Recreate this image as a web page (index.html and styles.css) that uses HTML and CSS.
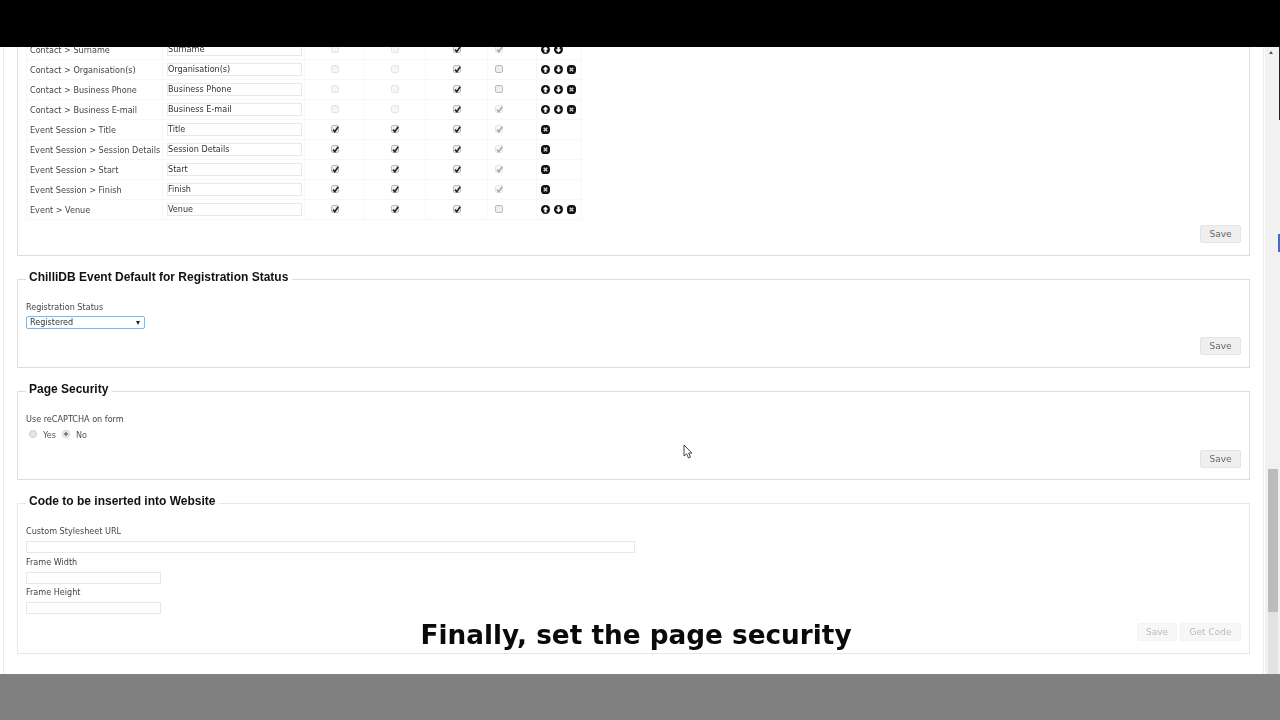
FILE: index.html
```html
<!DOCTYPE html>
<html lang="en">
<head>
<meta charset="utf-8">
<title>Form settings</title>
<link rel="stylesheet" href="styles.css">
</head>
<body>
<svg class="defs" width="0" height="0" aria-hidden="true">
  <symbol id="tick" viewBox="0 0 9 9"><path d="M2 4.6 3.8 6.6 7.2 1.8" fill="none" stroke="currentColor" stroke-width="1.6"/></symbol>
  <symbol id="up" viewBox="0 0 9 9"><circle cx="4.5" cy="4.5" r="4.5" fill="#111"/><path d="M4.5 1.5 7.4 4.6H5.6V7.4H3.4V4.6H1.6z" fill="#fff"/></symbol>
  <symbol id="down" viewBox="0 0 9 9"><circle cx="4.5" cy="4.5" r="4.5" fill="#111"/><path d="M4.5 7.5 7.4 4.4H5.6V1.6H3.4V4.4H1.6z" fill="#fff"/></symbol>
  <symbol id="del" viewBox="0 0 9 9"><rect width="9" height="9" rx="3.6" fill="#111"/><path d="M2.8 2.8 6.2 6.2M6.2 2.8 2.8 6.2" stroke="#ccc" stroke-width="1.6"/></symbol>
</svg>
<div class="top"></div>
<main class="stage">
  <div class="page">
    <div class="content">
      <fieldset class="panel first">
        <table class="grid">
          <tr><td class="lbl">Contact &gt; Surname</td><td class="val"><div class="txt">Surname</div></td><td class="c1"><span class="box off"></span></td><td class="c2"><span class="box off"></span></td><td class="c3"><span class="box on"><svg><use href="#tick"/></svg></span></td><td class="c4"><span class="box dim"><svg><use href="#tick"/></svg></span></td><td class="acts"><svg><use href="#up"/></svg><svg><use href="#down"/></svg></td></tr>
          <tr><td class="lbl">Contact &gt; Organisation(s)</td><td class="val"><div class="txt">Organisation(s)</div></td><td class="c1"><span class="box off"></span></td><td class="c2"><span class="box off"></span></td><td class="c3"><span class="box on"><svg><use href="#tick"/></svg></span></td><td class="c4"><span class="box on"></span></td><td class="acts"><svg><use href="#up"/></svg><svg><use href="#down"/></svg><svg><use href="#del"/></svg></td></tr>
          <tr><td class="lbl">Contact &gt; Business Phone</td><td class="val"><div class="txt">Business Phone</div></td><td class="c1"><span class="box off"></span></td><td class="c2"><span class="box off"></span></td><td class="c3"><span class="box on"><svg><use href="#tick"/></svg></span></td><td class="c4"><span class="box on"></span></td><td class="acts"><svg><use href="#up"/></svg><svg><use href="#down"/></svg><svg><use href="#del"/></svg></td></tr>
          <tr><td class="lbl">Contact &gt; Business E-mail</td><td class="val"><div class="txt">Business E-mail</div></td><td class="c1"><span class="box off"></span></td><td class="c2"><span class="box off"></span></td><td class="c3"><span class="box on"><svg><use href="#tick"/></svg></span></td><td class="c4"><span class="box dim"><svg><use href="#tick"/></svg></span></td><td class="acts"><svg><use href="#up"/></svg><svg><use href="#down"/></svg><svg><use href="#del"/></svg></td></tr>
          <tr><td class="lbl">Event Session &gt; Title</td><td class="val"><div class="txt">Title</div></td><td class="c1"><span class="box on"><svg><use href="#tick"/></svg></span></td><td class="c2"><span class="box on"><svg><use href="#tick"/></svg></span></td><td class="c3"><span class="box on"><svg><use href="#tick"/></svg></span></td><td class="c4"><span class="box dim"><svg><use href="#tick"/></svg></span></td><td class="acts"><svg><use href="#del"/></svg></td></tr>
          <tr><td class="lbl">Event Session &gt; Session Details</td><td class="val"><div class="txt">Session Details</div></td><td class="c1"><span class="box on"><svg><use href="#tick"/></svg></span></td><td class="c2"><span class="box on"><svg><use href="#tick"/></svg></span></td><td class="c3"><span class="box on"><svg><use href="#tick"/></svg></span></td><td class="c4"><span class="box dim"><svg><use href="#tick"/></svg></span></td><td class="acts"><svg><use href="#del"/></svg></td></tr>
          <tr><td class="lbl">Event Session &gt; Start</td><td class="val"><div class="txt">Start</div></td><td class="c1"><span class="box on"><svg><use href="#tick"/></svg></span></td><td class="c2"><span class="box on"><svg><use href="#tick"/></svg></span></td><td class="c3"><span class="box on"><svg><use href="#tick"/></svg></span></td><td class="c4"><span class="box dim"><svg><use href="#tick"/></svg></span></td><td class="acts"><svg><use href="#del"/></svg></td></tr>
          <tr><td class="lbl">Event Session &gt; Finish</td><td class="val"><div class="txt">Finish</div></td><td class="c1"><span class="box on"><svg><use href="#tick"/></svg></span></td><td class="c2"><span class="box on"><svg><use href="#tick"/></svg></span></td><td class="c3"><span class="box on"><svg><use href="#tick"/></svg></span></td><td class="c4"><span class="box dim"><svg><use href="#tick"/></svg></span></td><td class="acts"><svg><use href="#del"/></svg></td></tr>
          <tr><td class="lbl">Event &gt; Venue</td><td class="val"><div class="txt">Venue</div></td><td class="c1"><span class="box on"><svg><use href="#tick"/></svg></span></td><td class="c2"><span class="box on"><svg><use href="#tick"/></svg></span></td><td class="c3"><span class="box on"><svg><use href="#tick"/></svg></span></td><td class="c4"><span class="box on"></span></td><td class="acts"><svg><use href="#up"/></svg><svg><use href="#down"/></svg><svg><use href="#del"/></svg></td></tr>
        </table>
        <div class="actions a1"><button class="btn">Save</button></div>
      </fieldset>

      <fieldset class="panel p2">
        <legend>ChilliDB Event Default for Registration Status</legend>
        <div class="label">Registration Status</div>
        <div class="select"><span>Registered</span><i class="caret"></i></div>
        <div class="actions a2"><button class="btn">Save</button></div>
      </fieldset>

      <fieldset class="panel p3">
        <legend>Page Security</legend>
        <div class="label">Use reCAPTCHA on form</div>
        <div class="radios">
          <span class="radio"></span><span class="rtext">Yes</span>
          <span class="radio sel"></span><span class="rtext">No</span>
        </div>
        <div class="actions a3"><button class="btn">Save</button></div>
      </fieldset>

      <fieldset class="panel p4">
        <legend>Code to be inserted into Website</legend>
        <div class="label">Custom Stylesheet URL</div>
        <div class="field wide"></div>
        <div class="label">Frame Width</div>
        <div class="field"></div>
        <div class="label">Frame Height</div>
        <div class="field"></div>
        <div class="actions a4"><button class="btn faint">Save</button><button class="btn faint">Get Code</button></div>
      </fieldset>
    </div>
    <div class="scrollbar"><span class="arrow"></span><span class="thumb"></span><span class="track-low"></span></div>
  </div>
  <div class="edge"><span class="edge-dark"></span><span class="edge-blue"></span></div>
  <p class="caption">Finally, set the page security</p>
  <svg class="cursor" width="12" height="16" viewBox="0 0 12 16"><path d="M1 1v11l2.6-2.2L5.5 14l2-.9-1.8-4H9z" fill="#fff" stroke="#444" stroke-width="1"/></svg>
</main>
<div class="bottom"></div>
</body>
</html>
```

FILE: styles.css
```css
* { box-sizing: border-box; }
html, body { margin: 0; height: 100%; }
body {
  width: 1280px; height: 720px; overflow: hidden;
  display: flex; flex-direction: column;
  background: #fff; color: #444;
  font: 9px "DejaVu Sans", sans-serif;
  font-stretch: condensed;
}
.defs { position: absolute; }
.top { height: 47px; background: #000; flex: none; }
.bottom { height: 46px; background: #808080; flex: none; }
.stage { position: relative; height: 627px; flex: none; overflow: hidden; }
.page { display: flex; height: 100%; padding-left: 3px; }
.content {
  width: 1261px; padding: 0 13px;
  border-left: 1px solid #ececec; border-right: 1px solid #ececec;
  margin-top: -8px;
  filter: blur(.3px);
}
.panel {
  margin: 0 0 16px; padding: 0 9px 0 8px;
  border: 1px solid #ddd; min-width: 0; position: relative;
}
.panel legend {
  margin: 0; padding: 0 4px 0 3px; transform: translateY(-2px);
  font: bold 12px/14px "Liberation Sans", sans-serif; color: #111;
}
.first { border-top: 0; height: 217px; }
.grid { border-collapse: collapse; table-layout: fixed; width: 555px; }
.grid td { height: 20px; padding: 0; border: 1px solid #f7f7f7; text-align: center; vertical-align: middle; line-height: 0; }
.grid td.lbl { width: 136px; text-align: left; padding-left: 3px; color: #444; line-height: 12px; white-space: nowrap; }
.val { width: 142px; }
.c1 { width: 60px; } .c2 { width: 61px; } .c3 { width: 62px; } .c4 { width: 49px; } .acts { width: 45px; }
.grid td.val { text-align: left; padding-left: 4px; }
.grid td.c4 { text-align: left; padding-left: 7px; }
.txt {
  width: 135px; height: 13px; border: 1px solid #e8e8e8;
  padding: 0; color: #333; line-height: 11px;
}
.box {
  display: inline-block; width: 8px; height: 8px; border-radius: 2px; margin-top: -2px;
  border: 1px solid #bbb; background: #eee; color: #222; position: relative; vertical-align: middle;
}
.box svg { position: absolute; left: -1px; top: -1px; width: 9px; height: 9px; }
.box.off { background: #f6f6f6; border-color: #e4e4e4; }
.box.dim { background: #f8f8f8; border-color: #e6e6e6; color: #aaa; }
.grid td.acts { text-align: left; padding-left: 4px; }
.acts svg { width: 9px; height: 9px; margin-right: 4px; vertical-align: middle; }
.actions { display: flex; justify-content: flex-end; gap: 3px; margin-right: -1px; }
.a1 { margin-top: 5px; }
.btn {
  width: 41px; height: 18px; padding: 0; border: 1px solid #e4e4e4; border-radius: 2px;
  background: #efefef; color: #666; font: 9px "DejaVu Sans", sans-serif;
}
.btn.faint { width: 40px; background: #f7f7f7; border-color: #f3f3f3; color: #bbb; }
.btn.faint + .btn.faint { width: 61px; }
.label { color: #444; line-height: 12px; }
.p2, .p3 { height: 96px; }
.p4 { height: 158px; border-color: #e8e8e8; }
.panel legend + .label { margin-top: 15px; }
.select {
  width: 119px; height: 13px; margin-top: 3px; padding: 0 3px;
  border: 1px solid #8eb2d6; border-radius: 2px; color: #333;
  line-height: 11px; display: flex; align-items: center; justify-content: space-between;
}
.caret { width: 0; height: 0; border: 2.5px solid transparent; border-top: 4px solid #222; border-bottom: 0; margin-right: 1px; }
.a2 { margin-top: 8px; }
.radios { display: flex; align-items: center; height: 12px; margin-top: 4px; margin-left: 3px; }
.radio { width: 8px; height: 8px; border-radius: 50%; border: 1px solid #ccc; background: #e6e6e6; margin-top: -2px; }
.radio.sel { background: radial-gradient(circle, #777 0 1.5px, #f4f4f4 2px); margin-left: 6px; }
.rtext { color: #555; margin-left: 6px; }
.a3 { margin-top: 9px; }
.p4 .label { margin-top: 2.5px; }
.p4 legend + .label { margin-top: 15px; }
.field { width: 135px; height: 12px; border: 1px solid #e8e8e8; margin-top: 4px; }
.field.wide { width: 609px; }
.a4 { margin-top: 8.5px; }
.scrollbar { position: relative; width: 15px; margin-left: 1px; background: #f1f1f1; }
.arrow { position: absolute; left: 4px; top: 4px; border: 2.5px solid transparent; border-bottom: 3px solid #555; border-top: 0; }
.thumb { position: absolute; left: 3px; top: 422px; width: 10px; height: 143px; background: #bcbcbc; }
.track-low { position: absolute; left: 3px; top: 565px; width: 10px; height: 62px; background: #e2e2e2; }
.edge { position: absolute; right: 0; top: 0; width: 2px; height: 100%; }
.edge-dark { display: block; margin-left: 1px; width: 1px; height: 73px; background: #222; }
.edge-blue { display: block; position: absolute; top: 187px; width: 2px; height: 18px; background: #4a66c8; }
.caption {
  position: absolute; left: 0; width: 1272px; top: 573px; margin: 0;
  text-align: center; font: bold 26.3px/30px "DejaVu Sans", sans-serif; color: #0a0a0a;
}
.cursor { position: absolute; left: 683px; top: 397px; }
```
